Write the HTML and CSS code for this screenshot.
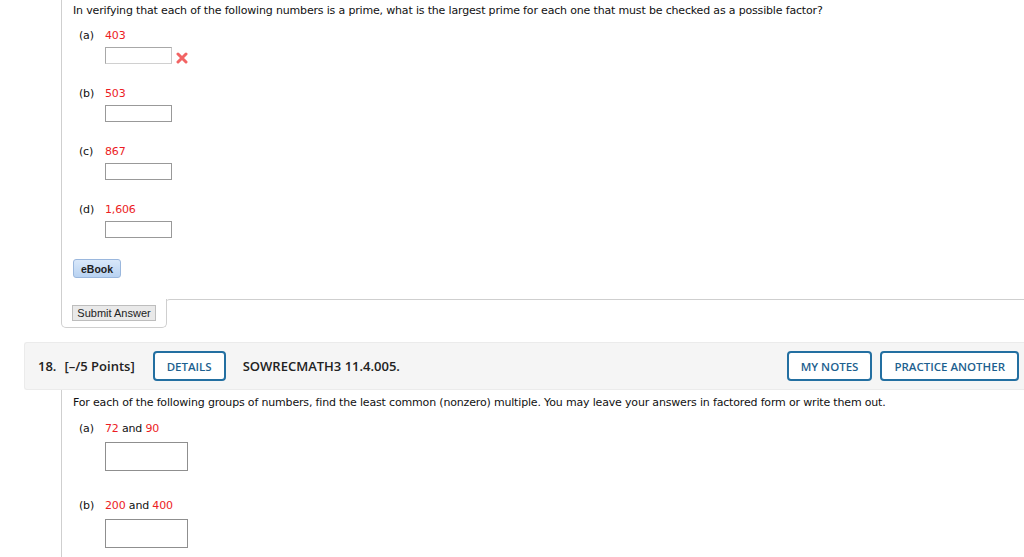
FILE: index.html
```html
<!DOCTYPE html>
<html>
<head>
<meta charset="utf-8">
<link rel="stylesheet" href="styles.css">
</head>
<body>
<section class="qbody">
  <p class="prompt">In verifying that each of the following numbers is a prime, what is the largest prime for each one that must be checked as a possible factor?</p>
  <div class="part">
    <div class="plabel"><span class="pl">(a)</span><span class="num">403</span></div>
    <div class="pinput"><span class="box small first"></span>
      <svg class="wrong" width="12" height="12" viewBox="0 0 12 12"><path d="M2 2 L10 10 M10 2 L2 10" stroke="#f26464" stroke-width="3" stroke-linecap="round"/></svg>
    </div>
  </div>
  <div class="part">
    <div class="plabel"><span class="pl">(b)</span><span class="num">503</span></div>
    <div class="pinput"><span class="box small"></span></div>
  </div>
  <div class="part">
    <div class="plabel"><span class="pl">(c)</span><span class="num">867</span></div>
    <div class="pinput"><span class="box small"></span></div>
  </div>
  <div class="part">
    <div class="plabel"><span class="pl">(d)</span><span class="num">1,606</span></div>
    <div class="pinput"><span class="box small"></span></div>
  </div>
  <div class="ebook-row"><span class="ebook">eBook</span></div>
</section>
<div class="submit-row">
  <div class="submit-cell"><span class="submit">Submit Answer</span></div>
  <div class="submit-fill"></div>
</div>

<header class="qhead">
  <span class="qnum">18.</span>
  <span class="qpts">[–/5 Points]</span>
  <span class="btn details">DETAILS</span>
  <span class="qcode">SOWRECMATH3 11.4.005.</span>
  <span class="spacer"></span>
  <span class="btn">MY NOTES</span>
  <span class="btn">PRACTICE ANOTHER</span>
</header>
<section class="qbody second">
  <p class="prompt">For each of the following groups of numbers, find the least common (nonzero) multiple. You may leave your answers in factored form or write them out.</p>
  <div class="part big">
    <div class="plabel"><span class="pl">(a)</span><span class="num">72</span>&nbsp;and&nbsp;<span class="num">90</span></div>
    <div class="pinput"><span class="box large"></span></div>
  </div>
  <div class="part big">
    <div class="plabel"><span class="pl">(b)</span><span class="num">200</span>&nbsp;and&nbsp;<span class="num">400</span></div>
    <div class="pinput"><span class="box large"></span></div>
  </div>
</section>
</body>
</html>
```
FILE: styles.css
```css
html, body {
  margin: 0;
  padding: 0;
  background: #fff;
}
body {
  font-family: "DejaVu Sans", Verdana, sans-serif;
  font-size: 11px;
  color: #111;
  width: 1024px;
  height: 557px;
  overflow: hidden;
}
.qbody {
  margin-left: 61px;
  border-left: 1px solid #cfcfcf;
  padding: 3px 0 21px 11px;
  letter-spacing: -0.17px;
}
.prompt {
  margin: 0;
  line-height: 16px;
  white-space: nowrap;
}
.part {
  margin-top: 7px;
  margin-bottom: 20px;
}
.plabel {
  display: flex;
  align-items: center;
  line-height: 16px;
  padding: 2px 0 0 6px;
}
.pl {
  width: 26px;
}
.num {
  color: #ec1c24;
}
.pinput {
  display: flex;
  align-items: center;
  padding-left: 32px;
  margin-top: 3px;
}
.box {
  display: block;
  box-sizing: border-box;
  border: 1px solid #999;
  background: #fff;
}
.box.small {
  width: 67px;
  height: 17px;
}
.box.first {
  border-color: #a8a8a8 #c8c8c8 #d0d0d0 #a8a8a8;
}
.wrong {
  margin-left: 4px;
  margin-top: 4px;
}
.ebook-row {
  margin-top: 21px;
  display: flex;
}
.ebook {
  box-sizing: border-box;
  width: 48px;
  height: 19px;
  display: flex;
  align-items: center;
  justify-content: center;
  font-family: "Liberation Sans", Arial, sans-serif;
  font-weight: bold;
  font-size: 10.5px;
  letter-spacing: 0;
  color: #1c1c1c;
  background: linear-gradient(#d9e8fa, #b8d2f1);
  border: 1px solid #9ab7dd;
  border-radius: 3px;
}
.submit-row {
  display: flex;
  margin-left: 61px;
  height: 29px;
}
.submit-cell {
  box-sizing: border-box;
  width: 106px;
  border: 1px solid #cfcfcf;
  border-top: none;
  border-radius: 0 0 5px 5px;
  padding: 6px 0 0 10px;
}
.submit {
  display: inline-block;
  box-sizing: border-box;
  width: 84px;
  height: 16px;
  line-height: 14px;
  text-align: center;
  font-family: "Liberation Sans", Arial, sans-serif;
  font-size: 11px;
  color: #222;
  background: #e9e9e9;
  border: 1px solid #bdbdbd;
}
.submit-fill {
  flex: 1;
  border-top: 1px solid #cfcfcf;
  border-top-left-radius: 4px;
  margin-left: -1px;
}
.qhead {
  box-sizing: border-box;
  margin: 14px 0 0 24px;
  height: 48px;
  display: flex;
  align-items: center;
  background: #f5f5f5;
  border: 1px solid #ebebeb;
  border-right: none;
  border-radius: 3px 0 0 3px;
  padding: 0 5px 0 13px;
  font-family: "Open Sans", sans-serif;
  font-weight: 600;
  font-size: 13px;
  color: #222;
}
.qnum {
  margin-right: 8px;
}
.qpts {
  margin-right: 18px;
}
.btn {
  box-sizing: border-box;
  height: 30px;
  display: flex;
  align-items: center;
  padding: 0 12px;
  border: 2px solid #236fa1;
  border-radius: 4px;
  color: #1d5f8f;
  font-size: 11.5px;
  font-weight: 600;
  background: #fff;
}
.btn + .btn {
  margin-left: 8px;
}
.details {
  margin-right: 17px;
}
.spacer {
  flex: 1;
}
.qbody.second {
  padding-top: 5px;
  padding-bottom: 8px;
}
.part.big {
  margin-top: 9px;
  margin-bottom: 26px;
}
.part.big .plabel {
  padding-top: 1px;
}
.part.big .pinput {
  margin-top: 5px;
}
.box.large {
  width: 83px;
  height: 29px;
  border-color: #8f8f8f;
}
```
